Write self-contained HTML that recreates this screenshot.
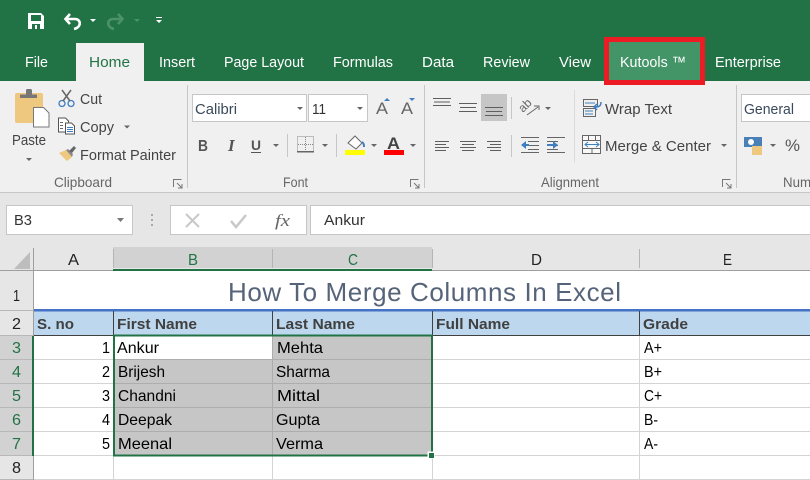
<!DOCTYPE html>
<html><head><meta charset="utf-8"><style>
html,body{margin:0;padding:0;width:810px;height:480px;overflow:hidden;background:#fff}
svg{display:block}
text{font-family:"Liberation Sans",sans-serif}
.t{font-size:15px;fill:#fff}
.r{font-size:15px;fill:#444}
.g{font-size:14px;fill:#666}
.c{font-size:16px;fill:#000}
.b{font-size:15px;fill:#404040;font-weight:bold}
.h{font-size:16px;fill:#222}
.hs{font-size:16px;fill:#217346}
</style></head><body>
<svg width="810" height="480" viewBox="0 0 810 480" xmlns="http://www.w3.org/2000/svg">
<rect width="810" height="81" fill="#217346"/>
<rect y="81" width="810" height="111" fill="#f0f0f0"/>
<rect y="192" width="810" height="55" fill="#e6e6e6"/>
<rect y="192" width="810" height="1" fill="#c6c6c6"/>
<!-- QAT -->
<path d="M28 13h13l3 3v13H28z" fill="#fff"/><rect x="31" y="15" width="10" height="6" fill="#217346"/><rect x="32" y="24" width="8" height="5" fill="#217346"/><rect x="35" y="25" width="2" height="4" fill="#fff"/>
<path d="M70 14l-4.500 5 4.500 5M66 19h9c6 0 7 8-1 10" fill="none" stroke="#fff" stroke-width="2.600"/>
<path d="M90 19h6l-3 3z" fill="#fff"/>
<path d="M118 14l4.500 5-4.500 5M122 19h-9c-6 0-7 8 1 10" fill="none" stroke="#4c9169" stroke-width="2.600"/>
<path d="M134 19h6l-3 3z" fill="#4c9169"/>
<path d="M156 17h6v1h-6zM156 20h6l-3 3z" fill="#fff"/>
<!-- Tabs -->
<rect x="76" y="43" width="68" height="38" fill="#f0f0f0"/>
<text class="t" x="25" y="67" textLength="23" lengthAdjust="spacingAndGlyphs">File</text>
<text class="t" x="89" y="67" textLength="41" lengthAdjust="spacingAndGlyphs" style="fill:#217346">Home</text>
<text class="t" x="159" y="67" textLength="36" lengthAdjust="spacingAndGlyphs">Insert</text>
<text class="t" x="224" y="67" textLength="80" lengthAdjust="spacingAndGlyphs">Page Layout</text>
<text class="t" x="333" y="67" textLength="60" lengthAdjust="spacingAndGlyphs">Formulas</text>
<text class="t" x="422" y="67" textLength="32" lengthAdjust="spacingAndGlyphs">Data</text>
<text class="t" x="483" y="67" textLength="47" lengthAdjust="spacingAndGlyphs">Review</text>
<text class="t" x="559" y="67" textLength="32" lengthAdjust="spacingAndGlyphs">View</text>
<rect x="606.500" y="39.500" width="96" height="43" fill="#439467" stroke="#ed1c24" stroke-width="5"/>
<text class="t" x="620" y="67" textLength="66" lengthAdjust="spacingAndGlyphs">Kutools ™</text>
<text class="t" x="715" y="67" textLength="66" lengthAdjust="spacingAndGlyphs">Enterprise</text>
<!-- Clipboard -->
<rect x="15" y="93" width="28" height="30" rx="2" fill="#edc87e"/>
<path d="M20 98v-3.500h6V90.500q0-1.500 1.500-1.500h3q1.500 0 1.500 1.500v4h5V98z" fill="#777"/>
<path d="M33.500 107.500h10l5.500 5.500v14H33.500z" fill="#fff" stroke="#777" stroke-width="1"/>
<text class="r" x="12" y="145" textLength="34" lengthAdjust="spacingAndGlyphs">Paste</text>
<path d="M26 158h6l-3 3z" fill="#666"/>
<circle cx="62" cy="103.500" r="3" fill="none" stroke="#3f7fc1" stroke-width="1.300"/><circle cx="71" cy="103.500" r="3" fill="none" stroke="#3f7fc1" stroke-width="1.300"/>
<path d="M63 101L71 90M70 101L62 90" stroke="#666" stroke-width="1.500"/>
<text class="r" x="80" y="104" textLength="22" lengthAdjust="spacingAndGlyphs">Cut</text>
<path d="M58.500 118h7l3 3v11h-10z" fill="#fff" stroke="#555"/><path d="M65.500 123h6l3 3v8h-9z" fill="#fff" stroke="#555"/><path d="M67 127.500h6M67 129.500h6M67 131.500h6" stroke="#3f7fc1"/><path d="M60 122.500h3M60 125.500h3M60 128.500h3" stroke="#666"/>
<text class="r" x="80" y="132" textLength="34" lengthAdjust="spacingAndGlyphs">Copy</text>
<path d="M124 125.500h6l-3 3z" fill="#666"/>
<path d="M59 153l7-3 6 7-5 4z" fill="#edc87e"/><path d="M66 150l2-1 5 5-1 3z" fill="#888"/><path d="M69 151l5-5 2 2-4 5z" fill="#666"/>
<text class="r" x="80" y="160" textLength="96" lengthAdjust="spacingAndGlyphs">Format Painter</text>
<text class="g" x="54" y="187" textLength="58" lengthAdjust="spacingAndGlyphs">Clipboard</text>
<path d="M173.500 179.500h8M173.500 179v8M177 183l5 5M182 184v4h-4" fill="none" stroke="#777"/>
<rect x="187" y="85" width="1" height="103" fill="#c6c6c6"/>
<!-- Font -->
<rect x="192.500" y="94.500" width="114" height="27" fill="#fff" stroke="#c6c6c6"/>
<rect x="308.500" y="94.500" width="59" height="27" fill="#fff" stroke="#c6c6c6"/>
<text class="r" x="195" y="114" textLength="42" lengthAdjust="spacingAndGlyphs" style="fill:#3a4a5a">Calibri</text>
<path d="M297 107h6l-3 3z" fill="#666"/>
<text class="r" x="312" y="114" textLength="14" lengthAdjust="spacingAndGlyphs" style="fill:#333">11</text>
<path d="M357 107h6l-3 3z" fill="#666"/>
<text x="376" y="114" font-size="17" fill="#666" textLength="12" lengthAdjust="spacingAndGlyphs">A</text><path d="M384 101h6l-3-3z" fill="#3f7fc1"/>
<text x="401" y="114" font-size="17" fill="#666" textLength="12" lengthAdjust="spacingAndGlyphs">A</text><path d="M409 98h6l-3 3z" fill="#3f7fc1"/>
<text x="198" y="151" font-size="16" font-weight="bold" fill="#555" textLength="10" lengthAdjust="spacingAndGlyphs">B</text>
<text x="228" y="151" font-size="17" font-weight="bold" font-style="italic" fill="#555" style="font-family:'Liberation Serif',serif">I</text>
<text x="251" y="150" font-size="14" font-weight="bold" fill="#555" textLength="10" lengthAdjust="spacingAndGlyphs">U</text><rect x="251" y="152" width="10" height="1" fill="#555"/>
<path d="M273 144h6l-3 3z" fill="#666"/>
<rect x="287" y="134" width="1" height="23" fill="#c6c6c6"/>
<rect x="297.500" y="136.500" width="16" height="15" fill="none" stroke="#888" stroke-dasharray="1 1"/><path d="M305.500 137v15M298 144.500h16" stroke="#888" stroke-dasharray="1 1"/><rect x="297" y="151" width="17" height="1.500" fill="#666"/>
<path d="M322 144h6l-3 3z" fill="#666"/>
<rect x="336" y="134" width="1" height="23" fill="#c6c6c6"/>
<path d="M348 143l7-7 7 7-6 6z" fill="#fff" stroke="#666"/><path d="M362 142c2 1 2 3 2 5" stroke="#3f7fc1" stroke-width="2" fill="none"/>
<rect x="345" y="150" width="20" height="5" fill="#ffff00"/>
<path d="M371 144h6l-3 3z" fill="#666"/>
<text x="387" y="149" font-size="17" font-weight="bold" fill="#444" textLength="13" lengthAdjust="spacingAndGlyphs">A</text>
<rect x="384" y="150" width="20" height="5" fill="#ff0000"/>
<path d="M410 144h6l-3 3z" fill="#666"/>
<text class="g" x="283" y="187" textLength="25" lengthAdjust="spacingAndGlyphs">Font</text>
<path d="M410.500 179.500h8M410.500 179v8M414 183l5 5M419 184v4h-4" fill="none" stroke="#777"/>
<rect x="424" y="85" width="1" height="103" fill="#c6c6c6"/>
<!-- Alignment -->
<rect x="481" y="94" width="26" height="27" fill="#c6c6c6"/>
<path d="M433 98.500h18M434 102h16M433 105.500h18M459 103.500h18M460 107.500h16M459 111.500h18M485 107.500h18M486 111.500h16M485 115.500h18" stroke="#5e5e5e" fill="none"/>
<rect x="511" y="97" width="1" height="22" fill="#c6c6c6"/>
<text x="0" y="0" font-size="12" fill="#666" transform="translate(523 113) rotate(-45)">ab</text>
<path d="M527 115l11-8M534 106h5v4" stroke="#666" fill="none"/>
<path d="M545 107h6l-3 3z" fill="#666"/>
<path d="M435 141.500h14M435 144.500h11M435 147.500h14M435 150.500h11M460 141.500h16M462 144.500h12M460 147.500h16M462 150.500h12M487 141.500h14M490 144.500h11M487 147.500h14M490 150.500h11" stroke="#5e5e5e" fill="none"/>
<rect x="511" y="135" width="1" height="22" fill="#c6c6c6"/>
<path d="M521 137.500h18M528 141.500h11M528 145.500h11M528 149.500h11M521 152.500h18" stroke="#666" fill="none"/><path d="M521 145l5-4v3h3v2h-3v3z" fill="#3f7fc1"/>
<path d="M547 137.500h18M547 141.500h11M547 145.500h11M547 149.500h11M547 152.500h18" stroke="#666" fill="none"/><path d="M558 145l-5-4v3h-6v2h6v3z" fill="#3f7fc1"/>
<rect x="574" y="90" width="1" height="73" fill="#dcdcdc"/>
<path d="M583.500 99.500h14v7h-14zM583.500 108.500h12v8h-12z" fill="none" stroke="#666"/><path d="M585 103h10M585 111h8M585 114h8" stroke="#3f7fc1"/>
<path d="M601 102c0 4-2 5-6 5h-1M597 104l-3 3 3 3" stroke="#3f7fc1" stroke-width="1.500" fill="none"/>
<text class="r" x="605" y="114" textLength="67" lengthAdjust="spacingAndGlyphs">Wrap Text</text>
<rect x="582.500" y="135.500" width="18" height="18" fill="#f8f8f8" stroke="#666"/><path d="M583 140.500h18M583 148.500h18M588.500 136v4M595.500 136v4M592 149v4" stroke="#666"/>
<path d="M585.500 144.500h13M588 142l-3 2.500 3 2.500M596 142l3 2.500-3 2.500" stroke="#3f7fc1" fill="none"/>
<text class="r" x="605" y="151" textLength="106" lengthAdjust="spacingAndGlyphs">Merge &amp; Center</text>
<path d="M721 144h6l-3 3z" fill="#666"/>
<text class="g" x="541" y="187" textLength="58" lengthAdjust="spacingAndGlyphs">Alignment</text>
<path d="M722.500 179.500h8M722.500 179v8M726 183l5 5M731 184v4h-4" fill="none" stroke="#777"/>
<rect x="736" y="85" width="1" height="103" fill="#c6c6c6"/>
<!-- Number -->
<rect x="741.500" y="94.500" width="80" height="27" fill="#fff" stroke="#c6c6c6"/>
<text class="r" x="744" y="114" textLength="50" lengthAdjust="spacingAndGlyphs" style="fill:#3a4a5a">General</text>
<rect x="744" y="137" width="18" height="10" fill="#4a7fb8"/><ellipse cx="751" cy="142" rx="3" ry="3" fill="#fff"/>
<rect x="752" y="146" width="10" height="9" fill="#edc87e"/>
<path d="M770 144h6l-3 3z" fill="#666"/>
<text x="785" y="151" font-size="17" fill="#555" textLength="15" lengthAdjust="spacingAndGlyphs">%</text>
<text class="g" x="783" y="187" textLength="28" lengthAdjust="spacingAndGlyphs">Num</text>
<!-- Formula bar -->
<rect x="6.500" y="205.500" width="126" height="29" fill="#fff" stroke="#c6c6c6"/>
<text class="r" x="14" y="225" textLength="18" lengthAdjust="spacingAndGlyphs" style="fill:#333">B3</text>
<path d="M117 218h7l-3.500 4z" fill="#777"/>
<path d="M151 214h2v2h-2zM151 219h2v2h-2zM151 224h2v2h-2z" fill="#aaa"/>
<rect x="170.500" y="205.500" width="136" height="29" fill="#fff" stroke="#c6c6c6"/>
<path d="M186 214l13 13M199 214l-13 13" stroke="#c8c8c8" stroke-width="2"/>
<path d="M231 221l5 6 10-12" stroke="#c8c8c8" stroke-width="2.500" fill="none"/>
<text x="275" y="226" font-size="17" font-style="italic" fill="#666" textLength="15" lengthAdjust="spacingAndGlyphs" style="font-family:'Liberation Serif',serif">fx</text>
<rect x="310.500" y="205.500" width="510" height="29" fill="#fff" stroke="#c6c6c6"/>
<text class="r" x="324" y="225" textLength="41" lengthAdjust="spacingAndGlyphs" style="fill:#333">Ankur</text>
<!-- Sheet headers -->
<rect y="247" width="810" height="233" fill="#fff"/>
<rect y="247" width="810" height="23" fill="#e6e6e6"/>
<rect y="270" width="33" height="210" fill="#e6e6e6"/>
<rect x="113" y="247" width="319" height="21" fill="#d2d2d2"/>
<rect y="336" width="33" height="120" fill="#d2d2d2"/>
<path d="M30 252v17H14z" fill="#bdbdbd"/>
<rect x="33" y="248" width="1" height="232" fill="#9f9f9f"/>
<path d="M113.500 249v19M272.500 249v19M432.500 249v19M639.500 249v19" stroke="#b5b5b5"/>
<rect y="270" width="810" height="1" fill="#9f9f9f"/>
<rect x="113" y="269" width="319" height="2" fill="#217346"/>
<text class="h" x="68" y="265" textLength="11" lengthAdjust="spacingAndGlyphs">A</text>
<text class="hs" x="188" y="265" textLength="10" lengthAdjust="spacingAndGlyphs">B</text>
<text class="hs" x="348" y="265" textLength="10" lengthAdjust="spacingAndGlyphs">C</text>
<text class="h" x="531" y="265" textLength="11" lengthAdjust="spacingAndGlyphs">D</text>
<text class="h" x="723" y="265" textLength="9" lengthAdjust="spacingAndGlyphs">E</text>
<text class="h" x="13" y="301" textLength="7" lengthAdjust="spacingAndGlyphs">1</text>
<text class="h" x="12" y="329" textLength="9" lengthAdjust="spacingAndGlyphs">2</text>
<text class="hs" x="12" y="353" textLength="9" lengthAdjust="spacingAndGlyphs">3</text>
<text class="hs" x="12" y="377" textLength="9" lengthAdjust="spacingAndGlyphs">4</text>
<text class="hs" x="12" y="401" textLength="9" lengthAdjust="spacingAndGlyphs">5</text>
<text class="hs" x="12" y="425" textLength="9" lengthAdjust="spacingAndGlyphs">6</text>
<text class="hs" x="12" y="449" textLength="9" lengthAdjust="spacingAndGlyphs">7</text>
<text class="h" x="12" y="473" textLength="9" lengthAdjust="spacingAndGlyphs">8</text>
<path d="M0 310.500h33M0 335.500h33M0 359.500h33M0 383.500h33M0 407.500h33M0 431.500h33M0 455.500h33M0 479.500h33" stroke="#b8b8b8"/>
<!-- Grid -->
<path d="M34 359.500h776M34 383.500h776M34 407.500h776M34 431.500h776M34 455.500h776M34 479.500h776" stroke="#d4d4d4"/>
<path d="M113.500 336v144M272.500 336v144M432.500 336v144M639.500 336v144" stroke="#d4d4d4"/>
<!-- Title -->
<text x="228" y="301" font-size="26" fill="#56647a" textLength="393" lengthAdjust="spacing">How To Merge Columns In Excel</text>
<!-- Row 2 -->
<rect x="34" y="311" width="776" height="24" fill="#bdd7ee"/>
<rect x="34" y="309" width="776" height="2.500" fill="#4472c4"/>
<path d="M113.500 311v24M272.500 311v24M432.500 311v24M639.500 311v24" stroke="#404040"/>
<rect x="34" y="335" width="776" height="1" fill="#404040"/>
<text class="b" x="37" y="329" textLength="37" lengthAdjust="spacingAndGlyphs">S. no</text>
<text class="b" x="117" y="329" textLength="80" lengthAdjust="spacingAndGlyphs">First Name</text>
<text class="b" x="276" y="329" textLength="79" lengthAdjust="spacingAndGlyphs">Last Name</text>
<text class="b" x="436" y="329" textLength="74" lengthAdjust="spacingAndGlyphs">Full Name</text>
<text class="b" x="643" y="329" textLength="45" lengthAdjust="spacingAndGlyphs">Grade</text>
<!-- Selection -->
<rect x="115" y="336" width="316" height="119" fill="#c6c6c6"/>
<rect x="115" y="336" width="157" height="23" fill="#fff"/>
<path d="M115 359.500h316M115 383.500h316M115 407.500h316M115 431.500h316M272.500 336v119" stroke="#adadad"/>
<!-- Data -->
<g>
<text class="c" x="102" y="353" textLength="8" lengthAdjust="spacingAndGlyphs">1</text>
<text class="c" x="102" y="377" textLength="8" lengthAdjust="spacingAndGlyphs">2</text>
<text class="c" x="102" y="401" textLength="8" lengthAdjust="spacingAndGlyphs">3</text>
<text class="c" x="102" y="425" textLength="8" lengthAdjust="spacingAndGlyphs">4</text>
<text class="c" x="102" y="449" textLength="8" lengthAdjust="spacingAndGlyphs">5</text>
<text class="c" x="117" y="353" textLength="42" lengthAdjust="spacingAndGlyphs">Ankur</text>
<text class="c" x="118" y="377" textLength="47" lengthAdjust="spacingAndGlyphs">Brijesh</text>
<text class="c" x="118" y="401" textLength="58" lengthAdjust="spacingAndGlyphs">Chandni</text>
<text class="c" x="118" y="425" textLength="54" lengthAdjust="spacingAndGlyphs">Deepak</text>
<text class="c" x="118" y="449" textLength="54" lengthAdjust="spacingAndGlyphs">Meenal</text>
<text class="c" x="277" y="353" textLength="46" lengthAdjust="spacingAndGlyphs">Mehta</text>
<text class="c" x="276" y="377" textLength="54" lengthAdjust="spacingAndGlyphs">Sharma</text>
<text class="c" x="277" y="401" textLength="43" lengthAdjust="spacingAndGlyphs">Mittal</text>
<text class="c" x="276" y="425" textLength="44" lengthAdjust="spacingAndGlyphs">Gupta</text>
<text class="c" x="276" y="449" textLength="47" lengthAdjust="spacingAndGlyphs">Verma</text>
<text class="c" x="644" y="353" textLength="18" lengthAdjust="spacingAndGlyphs">A+</text>
<text class="c" x="644" y="377" textLength="18" lengthAdjust="spacingAndGlyphs">B+</text>
<text class="c" x="644" y="401" textLength="18" lengthAdjust="spacingAndGlyphs">C+</text>
<text class="c" x="644" y="425" textLength="14" lengthAdjust="spacingAndGlyphs">B-</text>
<text class="c" x="644" y="449" textLength="14" lengthAdjust="spacingAndGlyphs">A-</text>
</g>
<!-- Selection border -->
<rect x="32" y="336" width="2" height="120" fill="#217346"/>
<rect x="114" y="335.500" width="318" height="120" fill="none" stroke="#217346" stroke-width="2"/>
<rect x="427.500" y="451.500" width="7" height="7" fill="#fff"/>
<rect x="429" y="453" width="5" height="5" fill="#217346"/>
</svg>
</body></html>
